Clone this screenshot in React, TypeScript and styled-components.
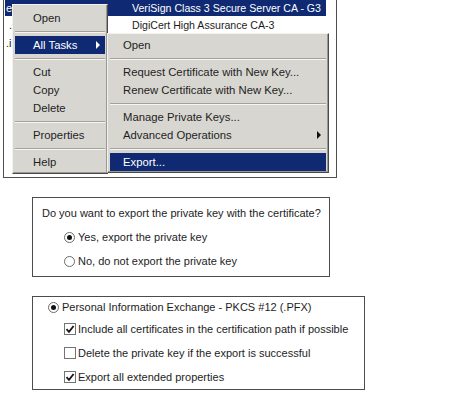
import React from 'react';
import styled, { createGlobalStyle } from 'styled-components';

const GlobalStyle = createGlobalStyle`
  html, body {
    margin: 0;
    padding: 0;
    background: #ffffff;
  }
`;

const Page = styled.div`
  width: 474px;
  height: 399px;
  display: flex;
  flex-direction: column;
  overflow: hidden;
`;

/* ---------- top screenshot: list + context menu ---------- */

const MenuShot = styled.div`
  position: relative;
  margin-left: 3px;
  width: 332px;
  height: 177px;
  border: 1px solid #4e4e4e;
  border-top: none;
  background: #ffffff;
  overflow: hidden;
  font-family: 'Liberation Sans', Arial, sans-serif;
  font-size: 11px;
`;

const ListRow = styled.div<{ $selected?: boolean; $h: number }>`
  display: flex;
  align-items: center;
  height: ${(p) => p.$h}px;
  margin-left: 1px;
  width: 321px;
  background: ${(p) => (p.$selected ? '#0f2a72' : 'transparent')};
  color: ${(p) => (p.$selected ? '#ffffff' : '#1c1c1c')};
`;

const Stub = styled.span`
  flex-shrink: 0;
  width: 126px;
  padding-left: 1px;
  white-space: nowrap;
`;

const ListName = styled.span`
  white-space: nowrap;
  font-size: 10.6px;
`;

const Menu = styled.div<{ $left: number; $top: number; $w: number }>`
  position: absolute;
  left: ${(p) => p.$left}px;
  top: ${(p) => p.$top}px;
  width: ${(p) => p.$w}px;
  box-sizing: border-box;
  display: flex;
  flex-direction: column;
  padding: ${(p) => (p.$top < 10 ? '4px 0 2px' : '2px 0 1px')};
  background: #d8d6d1;
  border: 1px solid;
  border-color: #f2f1ee #4a4a4a #4a4a4a #f2f1ee;
  box-shadow: inset -1px -1px 0 #9a9893;
  color: #1e1e1e;
`;

const MenuItem = styled.div<{ $active?: boolean; $indent: number }>`
  display: flex;
  align-items: center;
  height: 18px;
  margin: 0 2px;
  padding-left: ${(p) => p.$indent}px;
  background: ${(p) => (p.$active ? '#0f2a72' : 'transparent')};
  color: ${(p) => (p.$active ? '#ffffff' : '#1e1e1e')};
  white-space: nowrap;
  font-size: 11.3px;
`;

const Arrow = styled.span<{ $light?: boolean }>`
  margin-left: auto;
  margin-right: 5px;
  width: 0;
  height: 0;
  border-top: 4px solid transparent;
  border-bottom: 4px solid transparent;
  border-left: 4px solid ${(p) => (p.$light ? '#ffffff' : '#111111')};
`;

const Separator = styled.div`
  height: 9px;
  display: flex;
  align-items: center;
  margin: 0 2px;

  &::before {
    content: '';
    flex: 1;
    border-top: 1px solid #a3a19c;
    border-bottom: 1px solid #f7f6f3;
  }
`;

/* ---------- dialog fragments ---------- */

const DialogBox = styled.div<{ $w: number; $h: number; $top: number }>`
  margin-left: 32px;
  margin-top: ${(p) => p.$top}px;
  width: ${(p) => p.$w}px;
  height: ${(p) => p.$h}px;
  box-sizing: border-box;
  border: 1px solid #4c4c4c;
  background: #ffffff;
  font-family: 'Liberation Sans', Arial, sans-serif;
  font-size: 11px;
  color: #1d1d1d;
  display: flex;
  flex-direction: column;
`;

const OptionRow = styled.div<{ $indent: number; $h: number }>`
  display: flex;
  align-items: center;
  height: ${(p) => p.$h}px;
  padding-left: ${(p) => p.$indent}px;
  white-space: nowrap;
`;

const RadioCircle = styled.span<{ $on?: boolean }>`
  width: 11px;
  height: 11px;
  box-sizing: border-box;
  border-radius: 50%;
  border: 1px solid #6a6a6a;
  background: #ffffff;
  margin-right: 3px;
  display: flex;
  align-items: center;
  justify-content: center;

  &::after {
    content: '';
    width: 5px;
    height: 5px;
    border-radius: 50%;
    background: ${(p) => (p.$on ? '#111111' : 'transparent')};
  }
`;

const CheckBox = styled.span`
  width: 12px;
  height: 12px;
  box-sizing: border-box;
  border: 1px solid #747474;
  background: #ffffff;
  margin-right: 2px;
  display: flex;
  align-items: center;
  justify-content: center;
`;

const Radio = ({ on, label }: { on?: boolean; label: string }) => (
  <>
    <RadioCircle $on={on} />
    <span>{label}</span>
  </>
);

const Check = ({ on, label }: { on?: boolean; label: string }) => (
  <>
    <CheckBox>
      {on && (
        <svg width="10" height="10" viewBox="0 0 10 10">
          <path d="M1.5 5.2 L4 7.8 L8.6 2" fill="none" stroke="#151515" strokeWidth="1.8" />
        </svg>
      )}
    </CheckBox>
    <span>{label}</span>
  </>
);

export default function App() {
  return (
    <Page>
      <GlobalStyle />

      <MenuShot>
        <ListRow $selected $h={16}>
          <Stub>e</Stub>
          <ListName>VeriSign Class 3 Secure Server CA - G3</ListName>
        </ListRow>
        <ListRow $h={17}>
          <Stub>&nbsp;.</Stub>
          <ListName>DigiCert High Assurance CA-3</ListName>
        </ListRow>
        <ListRow $h={20}>
          <Stub>.i</Stub>
        </ListRow>

        <Menu $left={8} $top={4} $w={96}>
          <MenuItem $indent={18}>Open</MenuItem>
          <Separator />
          <MenuItem $indent={18} $active>
            All Tasks
            <Arrow $light />
          </MenuItem>
          <Separator />
          <MenuItem $indent={18}>Cut</MenuItem>
          <MenuItem $indent={18}>Copy</MenuItem>
          <MenuItem $indent={18}>Delete</MenuItem>
          <Separator />
          <MenuItem $indent={18}>Properties</MenuItem>
          <Separator />
          <MenuItem $indent={18}>Help</MenuItem>
        </Menu>

        <Menu $left={103} $top={33} $w={222}>
          <MenuItem $indent={13}>Open</MenuItem>
          <Separator />
          <MenuItem $indent={13}>Request Certificate with New Key...</MenuItem>
          <MenuItem $indent={13}>Renew Certificate with New Key...</MenuItem>
          <Separator />
          <MenuItem $indent={13}>Manage Private Keys...</MenuItem>
          <MenuItem $indent={13}>
            Advanced Operations
            <Arrow />
          </MenuItem>
          <Separator />
          <MenuItem $indent={13} $active>
            Export...
          </MenuItem>
        </Menu>
      </MenuShot>

      <DialogBox $w={298} $h={80} $top={19}>
        <OptionRow $indent={9} $h={30}>
          Do you want to export the private key with the certificate?
        </OptionRow>
        <OptionRow $indent={31} $h={18}>
          <Radio on label="Yes, export the private key" />
        </OptionRow>
        <OptionRow $indent={31} $h={30}>
          <Radio label="No, do not export the private key" />
        </OptionRow>
      </DialogBox>

      <DialogBox $w={333} $h={94} $top={19}>
        <OptionRow $indent={15} $h={20}>
          <Radio on label="Personal Information Exchange - PKCS #12 (.PFX)" />
        </OptionRow>
        <OptionRow $indent={31} $h={24}>
          <Check on label="Include all certificates in the certification path if possible" />
        </OptionRow>
        <OptionRow $indent={31} $h={24}>
          <Check label="Delete the private key if the export is successful" />
        </OptionRow>
        <OptionRow $indent={31} $h={24}>
          <Check on label="Export all extended properties" />
        </OptionRow>
      </DialogBox>
    </Page>
  );
}
